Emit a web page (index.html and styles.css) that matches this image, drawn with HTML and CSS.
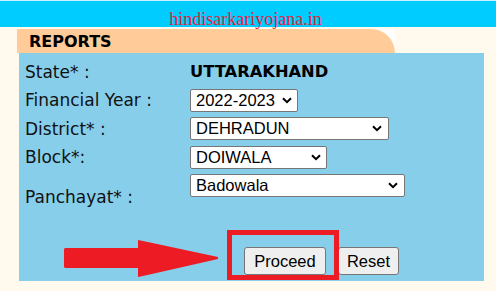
FILE: index.html
```html
<!DOCTYPE html>
<html>
<head>
<meta charset="utf-8">
<link rel="stylesheet" href="styles.css">
</head>
<body>
<div class="band"><span class="mark">hindisarkariyojana.in</span></div>
<div class="tabwrap"><div class="tab">REPORTS</div></div>
<div class="panel">
  <div class="row r1"><div class="label">State* :</div><div class="value">UTTARAKHAND</div></div>
  <div class="row r2"><div class="label">Financial Year :</div><span class="selwrap fy"><select class="sel"><option>2022-2023</option></select><svg class="chev" width="10" height="7" viewBox="0 0 10 7"><polyline points="1,1.2 5,5.2 9,1.2" fill="none" stroke="#000" stroke-width="2"/></svg></span></div>
  <div class="row r1"><div class="label">District* :</div><span class="selwrap dist"><select class="sel"><option>DEHRADUN</option></select><svg class="chev" width="10" height="7" viewBox="0 0 10 7"><polyline points="1,1.2 5,5.2 9,1.2" fill="none" stroke="#000" stroke-width="2"/></svg></span></div>
  <div class="row r2"><div class="label">Block*:</div><span class="selwrap blk"><select class="sel"><option>DOIWALA</option></select><svg class="chev" width="10" height="7" viewBox="0 0 10 7"><polyline points="1,1.2 5,5.2 9,1.2" fill="none" stroke="#000" stroke-width="2"/></svg></span></div>
  <div class="row pan"><div class="label">Panchayat* :</div><span class="selwrap panch"><select class="sel"><option>Badowala</option></select><svg class="chev" width="10" height="7" viewBox="0 0 10 7"><polyline points="1,1.2 5,5.2 9,1.2" fill="none" stroke="#000" stroke-width="2"/></svg></span></div>
  <div class="buttons"><button class="btn proceed">Proceed</button><button class="btn reset">Reset</button></div>
  <svg class="arrow" width="155" height="38" viewBox="0 0 155 38"><polygon points="1,8 74,8 74,0 79,1 154,17 154,19 79,36 74,37 74,28 1,28 0,27 0,9" fill="#ED1C24"/></svg>
  <div class="hl"></div>
</div>
</body>
</html>
```
FILE: styles.css
```css
html, body { margin: 0; padding: 0; }
body { background: #FFF9EE; width: 496px; height: 291px; overflow: hidden; }
.band { height: 27px; background: #00CCFF; box-sizing: border-box; padding-top: 10px; padding-right: 5px; text-align: center; border-top: 1px solid #C8F0FF; }
.mark { font-family: "Liberation Serif", serif; font-size: 18px; line-height: 18px; color: #E21F3A; display: inline-block; position: relative; top: -1px; }
.tabwrap { margin: 2px 0 0 17px; width: 378px; height: 24px; background: #FFFFFF; }
.tab { height: 24px; box-sizing: border-box; background: #FFCC99; border-top-right-radius: 24px 24px; padding: 1px 0 0 12px; font-family: "DejaVu Sans", Verdana, sans-serif; font-weight: bold; font-size: 16px; line-height: 23px; color: #000; }
.panel { position: relative; margin-left: 19px; width: 465px; height: 228px; background: #87CEEB; box-sizing: border-box; padding: 4px 0 0 6px; }
.row { display: flex; align-items: center; }
.r1 { height: 29px; }
.r2 { height: 28px; }
.pan { height: 52px; align-items: flex-start; }
.pan .label { align-self: center; }
.pan .selwrap { margin-top: 3px; }
.label { width: 165px; font-family: "DejaVu Sans", Verdana, sans-serif; font-size: 17px; color: #111; }
.value { font-family: "DejaVu Sans", Verdana, sans-serif; font-weight: bold; font-size: 16.3px; color: #000; }
.selwrap { position: relative; display: block; height: 23px; }
.sel { -webkit-appearance: none; appearance: none; display: block; width: 100%; font-family: "Liberation Sans", Arial, sans-serif; font-size: 16.5px; height: 23px; line-height: 21px; color: #000; background: #fff; border: 1px solid #767676; border-radius: 2px; padding: 0 0 0 5px; margin: 0; box-sizing: border-box; }
.chev { position: absolute; right: 6px; top: 8px; }
.fy { width: 108px; }
.dist { width: 199px; }
.dist .chev, .panch .chev { right: 7px; }
.blk { width: 137px; }
.panch { width: 215px; }
.buttons { display: flex; gap: 12px; margin: 24px 0 0 219px; }
.btn { font-family: "Liberation Sans", Arial, sans-serif; font-size: 16.5px; height: 28px; background: #EFEFEF; border: 1px solid #767676; border-radius: 3px; color: #000; padding: 0; margin: 0; }
.proceed { width: 82px; }
.reset { width: 61px; }
.arrow { position: absolute; left: 45px; top: 187px; }
.hl { position: absolute; left: 208px; top: 177px; width: 112px; height: 50px; box-sizing: border-box; border: 5px solid #ED1C24; }
```
